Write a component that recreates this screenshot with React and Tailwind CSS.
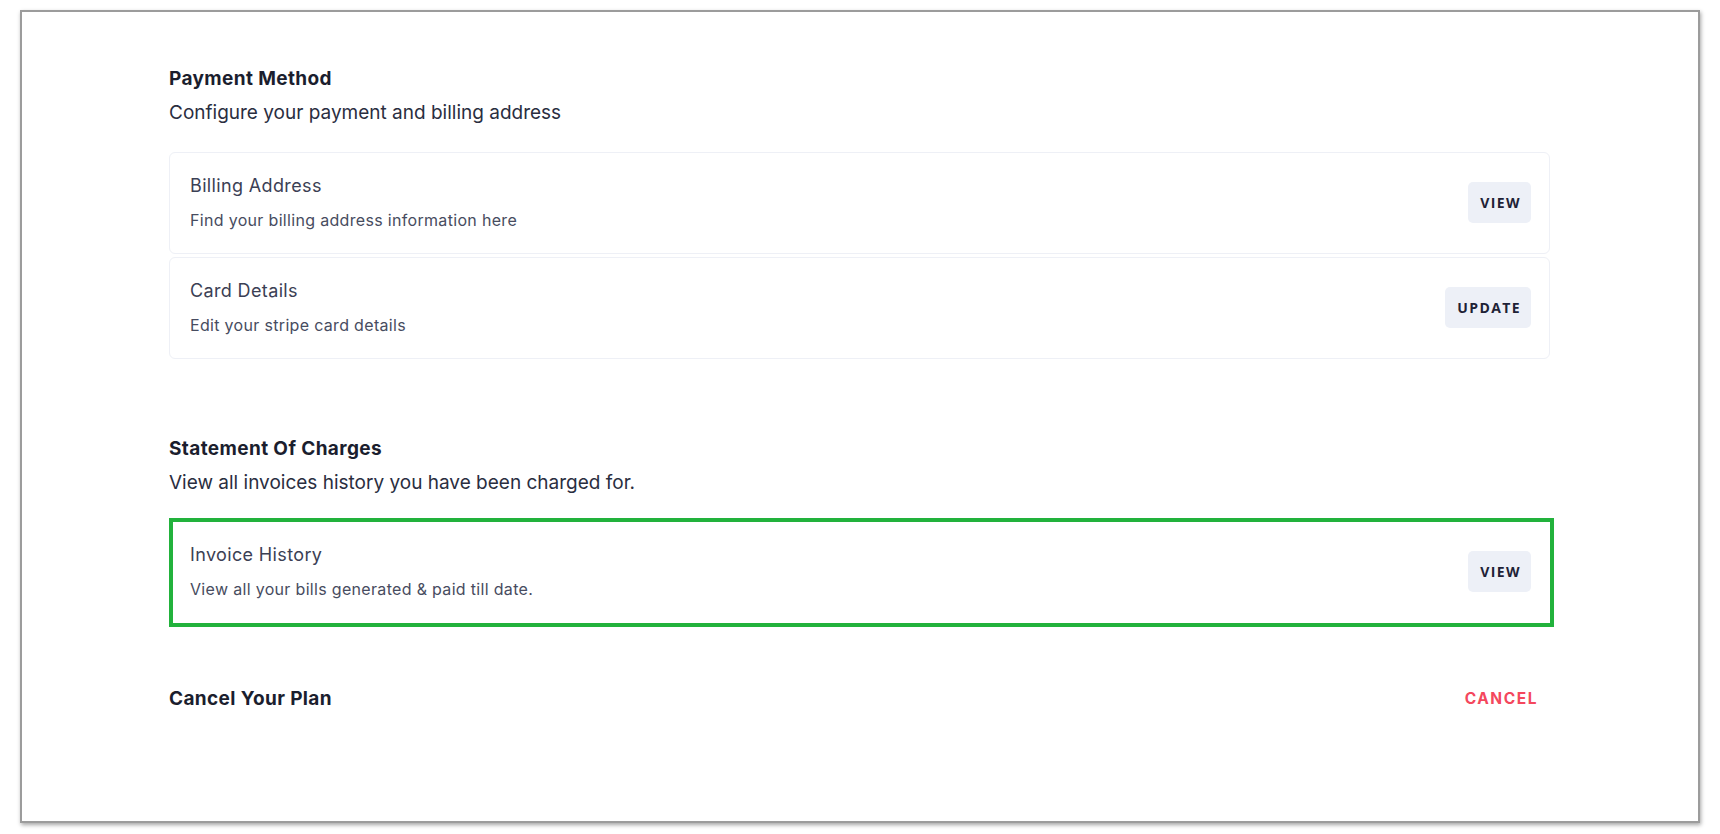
import React from 'react';

const SettingRow = ({ title, description, action, highlight }) => (
    <div
        className={`flex items-center justify-between bg-white ${highlight
            ? 'border-4 border-[#22b23c] pl-[17px] pr-[19px] pt-[21px] pb-[24px] mr-[-4px]'
            : 'border border-[#eef0f6] rounded-md pl-[20px] pr-[18px] pt-[21px] pb-[23px]'
            }`}
    >
        <div>
            <div className="text-[18px] leading-6 tracking-[0.02em] text-[#3b4054]">{title}</div>
            <div className="mt-[12px] text-[16px] leading-5 tracking-[0.02em] text-[#474c60]">{description}</div>
        </div>
        <button className="h-[41px] pl-[12px] pr-[10px] rounded-[5px] bg-[#edf0f7] text-[14px] font-bold tracking-[0.1em] text-[#1e2236] font-['Open_Sans',sans-serif]">
            {action}
        </button>
    </div>
);

const SectionHeader = ({ title, subtitle }) => (
    <div>
        <h2 className="text-[19px] leading-6 font-bold tracking-[0.02em] text-[#1b1e2e]">{title}</h2>
        {subtitle && <p className="mt-[10px] text-[19px] leading-6 text-[#2a2e3f]">{subtitle}</p>}
    </div>
);

const App = () => {
    return (
        <div className="min-h-screen bg-white pt-[10px] pl-[20px] font-['Inter',sans-serif]">
            <div className="w-[1680px] h-[813px] bg-white border-2 border-[#9c9c9c] shadow-[1px_2px_4px_rgba(0,0,0,0.35)] pl-[147px] pr-[148px] pt-[55px]">
                {/* Payment Method */}
                <SectionHeader title="Payment Method" subtitle="Configure your payment and billing address" />
                <div className="mt-[27px] flex flex-col gap-[3px]">
                    <SettingRow title="Billing Address" description="Find your billing address information here" action="VIEW" />
                    <SettingRow title="Card Details" description="Edit your stripe card details" action="UPDATE" />
                </div>

                {/* Statement Of Charges */}
                <div className="mt-[78px]">
                    <SectionHeader title="Statement Of Charges" subtitle="View all invoices history you have been charged for." />
                </div>
                <div className="mt-[23px]">
                    <SettingRow highlight title="Invoice History" description="View all your bills generated & paid till date." action="VIEW" />
                </div>

                {/* Cancel */}
                <div className="mt-[60px] flex items-center justify-between">
                    <h2 className="text-[19px] leading-6 font-bold tracking-[0.02em] text-[#1b1e2e]">Cancel Your Plan</h2>
                    <button className="px-[12px] text-[15.5px] font-bold tracking-[0.1em] text-[#f4475d]">CANCEL</button>
                </div>
            </div>
        </div>
    );
};

export default App;
